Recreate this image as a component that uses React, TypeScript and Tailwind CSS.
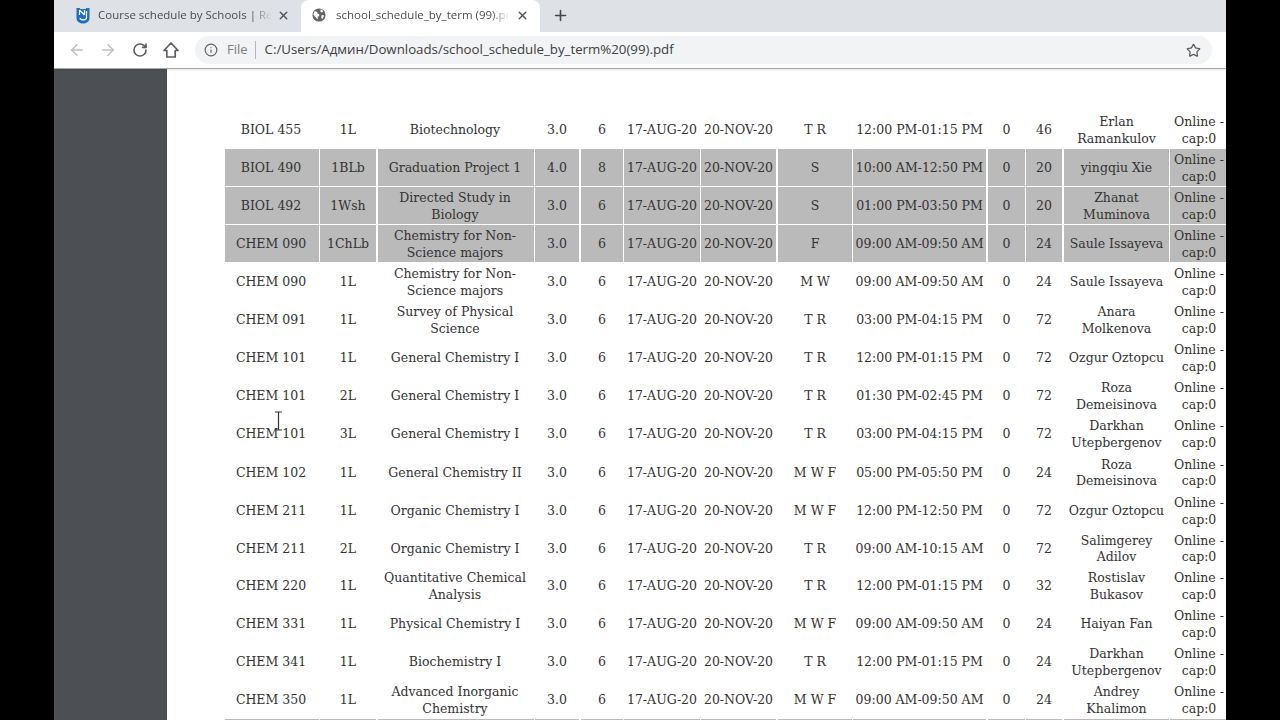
import { ArrowLeft, ArrowRight, Info, Plus, RotateCw, Star, X } from "lucide-react";

const rows = [
  { code: "BIOL 455", sec: "1L", title: "Biotechnology", cr: "3.0", ects: "6", days: "T R", time: "12:00 PM-01:15 PM", cap: "46", teacher: "Erlan Ramankulov" },
  { code: "BIOL 490", sec: "1BLb", title: "Graduation Project 1", cr: "4.0", ects: "8", days: "S", time: "10:00 AM-12:50 PM", cap: "20", teacher: "yingqiu Xie", gray: true },
  { code: "BIOL 492", sec: "1Wsh", title: "Directed Study in Biology", cr: "3.0", ects: "6", days: "S", time: "01:00 PM-03:50 PM", cap: "20", teacher: "Zhanat Muminova", gray: true },
  { code: "CHEM 090", sec: "1ChLb", title: "Chemistry for Non-Science majors", cr: "3.0", ects: "6", days: "F", time: "09:00 AM-09:50 AM", cap: "24", teacher: "Saule Issayeva", gray: true },
  { code: "CHEM 090", sec: "1L", title: "Chemistry for Non-Science majors", cr: "3.0", ects: "6", days: "M W", time: "09:00 AM-09:50 AM", cap: "24", teacher: "Saule Issayeva" },
  { code: "CHEM 091", sec: "1L", title: "Survey of Physical Science", cr: "3.0", ects: "6", days: "T R", time: "03:00 PM-04:15 PM", cap: "72", teacher: "Anara Molkenova" },
  { code: "CHEM 101", sec: "1L", title: "General Chemistry I", cr: "3.0", ects: "6", days: "T R", time: "12:00 PM-01:15 PM", cap: "72", teacher: "Ozgur Oztopcu" },
  { code: "CHEM 101", sec: "2L", title: "General Chemistry I", cr: "3.0", ects: "6", days: "T R", time: "01:30 PM-02:45 PM", cap: "72", teacher: "Roza Demeisinova" },
  { code: "CHEM 101", sec: "3L", title: "General Chemistry I", cr: "3.0", ects: "6", days: "T R", time: "03:00 PM-04:15 PM", cap: "72", teacher: "Darkhan Utepbergenov" },
  { code: "CHEM 102", sec: "1L", title: "General Chemistry II", cr: "3.0", ects: "6", days: "M W F", time: "05:00 PM-05:50 PM", cap: "24", teacher: "Roza Demeisinova", height: "h-[39px]" },
  { code: "CHEM 211", sec: "1L", title: "Organic Chemistry I", cr: "3.0", ects: "6", days: "M W F", time: "12:00 PM-12:50 PM", cap: "72", teacher: "Ozgur Oztopcu" },
  { code: "CHEM 211", sec: "2L", title: "Organic Chemistry I", cr: "3.0", ects: "6", days: "T R", time: "09:00 AM-10:15 AM", cap: "72", teacher: "Salimgerey Adilov", height: "h-[37px]" },
  { code: "CHEM 220", sec: "1L", title: "Quantitative Chemical Analysis", cr: "3.0", ects: "6", days: "T R", time: "12:00 PM-01:15 PM", cap: "32", teacher: "Rostislav Bukasov" },
  { code: "CHEM 331", sec: "1L", title: "Physical Chemistry I", cr: "3.0", ects: "6", days: "M W F", time: "09:00 AM-09:50 AM", cap: "24", teacher: "Haiyan Fan" },
  { code: "CHEM 341", sec: "1L", title: "Biochemistry I", cr: "3.0", ects: "6", days: "T R", time: "12:00 PM-01:15 PM", cap: "24", teacher: "Darkhan Utepbergenov" },
  { code: "CHEM 350", sec: "1L", title: "Advanced Inorganic Chemistry", cr: "3.0", ects: "6", days: "M W F", time: "09:00 AM-09:50 AM", cap: "24", teacher: "Andrey Khalimon" },
];

const cell1 = "border-r border-b border-white pt-[2px] text-center";
const cell2 = "border-r-2 border-b border-white pt-[2px] text-center";

const SchoolIcon = () => (
  <svg viewBox="0 0 14 17" className="h-[17px] w-[14px] shrink-0">
    <path d="M0.500 1h3l1 1h5l1-1h3v10c0 3.200-2.700 5.500-6.500 5.500S0.500 14.200 0.500 11z" fill="#1b6ec2" />
    <path d="M3.500 3v5M3.500 3l5 5M8.500 3v5" stroke="#fff" strokeWidth="1.200" fill="none" />
    <path d="M10.500 4v7c0 2.400-6.500 2.400-6.500 0" stroke="#fff" strokeWidth="1.300" fill="none" />
  </svg>
);

const GlobeIcon = () => (
  <svg viewBox="0 0 16 16" className="h-[14px] w-[14px] shrink-0">
    <circle cx="8" cy="8" r="7.500" fill="#5f6368" />
    <path d="M3 3.500l3 1 .5 2 2 1-.5 2-1.500.5v3L3 9.500 1.500 7zM10 1.500l3 2-1.500 1.500-2-.5zM11 8l3 .5-2 4-1.500-1z" fill="#fff" />
  </svg>
);

const HomeIcon = () => (
  <svg viewBox="0 0 18 18" className="ml-[14px] h-[18px] w-[18px] text-[#5a5d61]">
    <path d="M9 2L2 9.500h2.800V16h8.400V9.500H16z" fill="none" stroke="currentColor" strokeWidth="1.700" strokeLinejoin="round" />
  </svg>
);

export default function App() {
  return (
    <div className="flex h-[720px] w-[1280px] justify-center overflow-hidden bg-black font-['DejaVu_Serif',serif]">
      <div className="flex h-full w-[1172px] flex-col overflow-hidden">
        {/* tab strip */}
        <div className="flex h-8 shrink-0 items-center bg-[#dee1e6] font-['Open_Sans',sans-serif] text-[11.5px] text-[#4a4d51]">
          <div className="flex h-full w-[247px] items-center pb-[2px] pl-[22px]">
            <SchoolIcon />
            <span className="ml-[8px] w-[174px] overflow-hidden whitespace-nowrap [mask-image:linear-gradient(to_right,black_88%,transparent)]">
              Course schedule by Schools | Registrar
            </span>
            <X size={13} strokeWidth={2.6} className="ml-[5px] text-[#50545a]" />
          </div>
          <div className="flex h-full w-[239px] items-center rounded-t-lg bg-white pb-[2px] pl-[11px]">
            <GlobeIcon />
            <span className="ml-[10px] w-[173px] overflow-hidden whitespace-nowrap [mask-image:linear-gradient(to_right,black_90%,transparent)]">
              school_schedule_by_term (99).pdf
            </span>
            <X size={13} strokeWidth={2.6} className="ml-[7px] text-[#50545a]" />
          </div>
          <Plus size={17} strokeWidth={2.2} className="mb-[2px] ml-[12px] text-[#43464a]" />
        </div>

        {/* toolbar */}
        <div className="flex h-[36px] shrink-0 items-center bg-white pl-[14px] pr-[14px]">
          <ArrowLeft size={18} strokeWidth={2} className="text-[#bcbec2]" />
          <ArrowRight size={18} strokeWidth={2} className="ml-[13px] text-[#bcbec2]" />
          <RotateCw size={16} strokeWidth={2.4} className="ml-[15px] text-[#5a5d61]" />
          <HomeIcon />
          <div className="ml-[15px] flex h-[28px] flex-1 items-center rounded-full bg-[#f1f3f4] pl-[9px] pr-[11px] font-['Open_Sans',sans-serif]">
            <Info size={14} strokeWidth={2} className="text-[#5f6368]" />
            <span className="ml-[9px] text-[13px] text-[#7b7e82]">File</span>
            <span className="ml-[7px] h-[18px] w-px bg-[#b4b6b9]" />
            <span className="ml-[9px] flex-1 whitespace-nowrap text-[13.27px] text-[#3d4043]">
              C:/Users/Админ/Downloads/school_schedule_by_term%20(99).pdf
            </span>
            <Star size={15} strokeWidth={2} className="text-[#5a5d61]" />
          </div>
        </div>
        <div className="relative z-10 h-px shrink-0 bg-[#a8a8a8] shadow-[0_1px_2px_rgba(0,0,0,0.15)]" />

        {/* pdf viewer */}
        <div className="relative flex min-h-0 flex-1">
          <div className="w-[113px] shrink-0 bg-[#4c4f53]" />
          <div className="min-w-0 flex-1 overflow-hidden bg-white pl-[58px] pt-[42px] text-[12.5px] leading-[16.5px] text-[#333]">
            <table className="w-[1003px] table-fixed border-separate border-spacing-0">
              <colgroup>
                <col className="w-[95px]" />
                <col className="w-[58px]" />
                <col className="w-[157px]" />
                <col className="w-[46px]" />
                <col className="w-[43px]" />
                <col className="w-[77px]" />
                <col className="w-[77px]" />
                <col className="w-[75px]" />
                <col className="w-[135px]" />
                <col className="w-[38px]" />
                <col className="w-[38px]" />
                <col className="w-[106px]" />
                <col className="w-[58px]" />
              </colgroup>
              <tbody>
                {rows.map((r, i) => (
                  <tr key={i} className={`${r.height ?? "h-[38px]"} ${r.gray ? "bg-[#bababa]" : ""}`}>
                    <td className={`${cell1} pr-[2px]`}>{r.code}</td>
                    <td className={cell2}>{r.sec}</td>
                    <td className={cell1}><div className="pl-[3px] pr-[5px]">{r.title}</div></td>
                    <td className={cell2}>{r.cr}</td>
                    <td className={cell1}>{r.ects}</td>
                    <td className={cell1}>17-AUG-20</td>
                    <td className={cell2}>20-NOV-20</td>
                    <td className={cell1}>{r.days}</td>
                    <td className={cell2}><span className="whitespace-nowrap">{r.time}</span></td>
                    <td className={cell1}>0</td>
                    <td className={cell2}>{r.cap}</td>
                    <td className={cell1}><div className="px-1">{r.teacher}</div></td>
                    <td className="border-b border-white pt-[2px] text-center">Online - cap:0</td>
                  </tr>
                ))}
                <tr className="h-[38px] bg-[#bababa]">
                  <td className={cell1} />
                  <td className={cell2} />
                  <td className={cell1} />
                  <td className={cell2} />
                  <td className={cell1} />
                  <td className={cell1} />
                  <td className={cell2} />
                  <td className={cell1} />
                  <td className={cell2} />
                  <td className={cell1} />
                  <td className={cell2} />
                  <td className={cell1} />
                  <td />
                </tr>
              </tbody>
            </table>
          </div>
          {/* text cursor */}
          <svg viewBox="0 0 9 20" className="absolute left-[220px] top-[342px] h-[20px] w-[9px] text-[#333]">
            <path d="M1 1h7M4.500 1v18M1 19h7" stroke="currentColor" strokeWidth="1.200" fill="none" />
          </svg>
        </div>
      </div>
    </div>
  );
}
